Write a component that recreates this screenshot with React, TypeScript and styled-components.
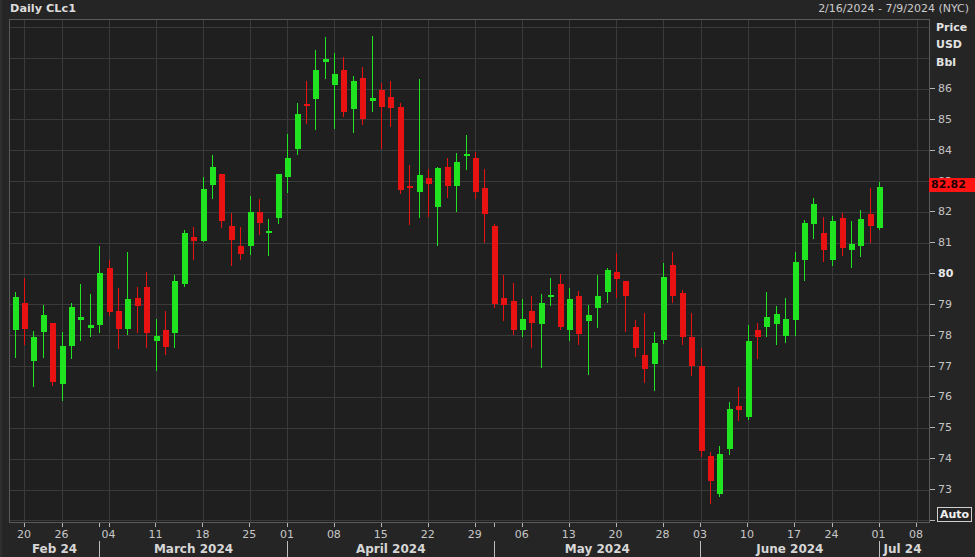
import React from "react";
import styled, { createGlobalStyle } from "styled-components";

type Bar = [open: number, high: number, low: number, close: number];

// CLc1 daily bars, 16 Feb 2024 -> 1 Jul 2024
const BARS: Bar[] = [
    [78.18, 79.39, 77.26, 79.24], [79.06, 79.85, 77.69, 78.20], [77.17, 78.15, 76.34, 77.96], [78.12, 78.98, 77.26, 78.67],
    [78.41, 78.41, 76.37, 76.50], [76.43, 78.10, 75.88, 77.66], [77.66, 79.06, 77.23, 78.93], [78.50, 79.66, 77.82, 78.59],
    [78.24, 79.34, 77.96, 78.33], [78.32, 80.90, 78.09, 80.03], [80.19, 80.45, 78.61, 78.77], [78.79, 79.53, 77.56, 78.20],
    [78.20, 80.71, 78.01, 79.19], [79.20, 79.58, 78.07, 78.96], [79.58, 80.05, 77.58, 78.07], [77.82, 78.52, 76.83, 77.98],
    [78.16, 78.79, 77.35, 77.62], [78.09, 79.96, 77.60, 79.77], [79.67, 81.42, 79.58, 81.31], [81.20, 81.52, 80.45, 81.07],
    [81.06, 83.12, 81.04, 82.75], [82.88, 83.84, 82.42, 83.47], [83.23, 83.23, 81.49, 81.71], [81.55, 81.97, 80.24, 81.09],
    [80.90, 81.52, 80.45, 80.64], [80.88, 82.53, 80.61, 82.00], [82.00, 82.42, 81.24, 81.64], [81.32, 81.77, 80.58, 81.38],
    [81.80, 83.22, 81.61, 83.22], [83.14, 84.53, 82.61, 83.74], [84.04, 85.54, 83.85, 85.18], [85.50, 86.24, 84.85, 85.44],
    [85.66, 87.25, 84.66, 86.60], [86.87, 87.66, 86.31, 86.95], [86.11, 87.14, 84.69, 86.46], [86.60, 87.03, 85.07, 85.25],
    [85.33, 86.41, 84.57, 86.24], [86.35, 86.71, 84.82, 85.01], [85.60, 87.70, 85.25, 85.70], [85.95, 86.17, 84.03, 85.39],
    [85.73, 86.24, 84.74, 85.38], [85.41, 85.54, 82.57, 82.71], [82.85, 83.52, 81.58, 82.77], [82.66, 86.30, 81.81, 83.18],
    [83.11, 83.38, 81.84, 82.89], [82.15, 83.47, 80.90, 83.41], [83.44, 83.76, 82.44, 82.85], [82.85, 83.90, 82.01, 83.62],
    [83.84, 84.50, 83.36, 83.89], [83.74, 83.95, 82.41, 82.66], [82.79, 83.38, 80.99, 81.93], [81.55, 81.60, 78.87, 79.03],
    [79.20, 79.96, 78.45, 78.99], [79.12, 79.71, 78.02, 78.16], [78.18, 79.17, 77.94, 78.52], [78.79, 79.26, 77.58, 78.41],
    [78.37, 79.33, 76.94, 79.06], [79.26, 79.85, 78.95, 79.32], [79.67, 79.99, 78.16, 78.28], [78.18, 79.53, 77.82, 79.17],
    [79.28, 79.42, 77.69, 78.05], [78.47, 78.99, 76.72, 78.66], [78.88, 79.94, 78.23, 79.28], [79.40, 80.19, 79.04, 80.12],
    [80.06, 80.66, 79.20, 79.82], [79.77, 79.77, 78.12, 79.29], [78.27, 78.50, 77.29, 77.58], [77.36, 78.72, 76.45, 76.91],
    [77.06, 78.11, 76.21, 77.76], [77.85, 80.33, 77.72, 79.88], [80.29, 80.70, 79.04, 79.26], [79.37, 79.48, 77.67, 77.93],
    [77.96, 78.72, 76.69, 77.00], [77.02, 77.58, 74.06, 74.26], [74.08, 74.22, 72.53, 73.28], [72.85, 74.41, 72.77, 74.14],
    [74.33, 75.85, 74.12, 75.61], [75.72, 76.34, 75.23, 75.58], [75.36, 78.34, 75.27, 77.80], [78.18, 78.41, 77.24, 77.93],
    [78.27, 79.39, 77.94, 78.58], [78.37, 78.94, 77.69, 78.69], [77.99, 79.20, 77.75, 78.52], [78.50, 80.71, 77.99, 80.38],
    [80.45, 81.74, 79.77, 81.63], [81.61, 82.44, 81.12, 82.25], [81.33, 81.85, 80.37, 80.76], [80.45, 81.87, 80.26, 81.71],
    [81.80, 81.96, 80.58, 80.84], [80.77, 81.71, 80.19, 80.95], [80.88, 82.06, 80.53, 81.77], [81.92, 82.77, 80.99, 81.55],
    [81.47, 82.98, 81.41, 82.82],
];

// first trading day of each week (slot index, day label)
const WEEKS: [number, string][] = [
    [1, "20"], [5, "26"], [10, "04"], [15, "11"], [20, "18"], [25, "25"], [29, "01"], [34, "08"], [39, "15"], [44, "22"],
    [49, "29"], [54, "06"], [59, "13"], [64, "20"], [69, "28"], [73, "03"], [78, "10"], [83, "17"], [87, "24"], [92, "01"], [96, "08"],
];
// first trading day of each month; the last edge closes "Jul 24"
const MONTH_STARTS = [9, 29, 51, 73, 92];
const MONTHS = ["Feb 24", "March 2024", "April 2024", "May 2024", "June 2024", "Jul 24"];
const AXIS_END_SLOT = 97;

const PLOT_W = 919;
const PLOT_H = 502;
const PLOT_LEFT = 10;
const SLOT = 9.397;
const FIRST_SLOT = 4.6;
const PX_PER_USD = 30.85;
const UP = "#1fe41f";
const DOWN = "#e81212";

const slotX = (i: number) => FIRST_SLOT + i * SLOT;
const priceY = (p: number) => 68.5 + (86 - p) * PX_PER_USD;

const LAST = BARS[BARS.length - 1][3];
const PRICE_LEVELS = [86, 85, 84, 83, 82, 81, 80, 79, 78, 77, 76, 75, 74, 73];
// axis box starts 1px above the plot's inner area (the border)
const AXIS_HEAD = priceY(PRICE_LEVELS[0]) + 1 - PX_PER_USD / 2;

// grid line n of the date axis sits on the centre of slot n - 2
const slotLine = (i: number) => i + 2;

const GlobalStyle = createGlobalStyle`
    html, body { margin: 0; padding: 0; background: #252525; }
    body { font-family: "DejaVu Sans", "Liberation Sans", sans-serif; }
`;

const Terminal = styled.div`
    width: 975px;
    height: 557px;
    overflow: hidden;
    background: #252525;
    box-shadow: inset 2px 0 0 #2f2f2f;
`;

const TitleBar = styled.header`
    height: 19px;
    display: flex;
    align-items: center;
    justify-content: space-between;
    padding: 0 6px 2px 10px;
    box-sizing: border-box;
`;

const Title = styled.span`
    font-size: 11.3px;
    font-weight: bold;
    color: #dcdcdc;
`;

const Range = styled.span`
    font-size: 11px;
    color: #cbcbcb;
`;

const ChartGrid = styled.div`
    display: grid;
    grid-template-columns: 9px 921px 45px;
    grid-template-rows: 504px 34px;
`;

const Plot = styled.div`
    grid-column: 2;
    grid-row: 1;
    border: 1px solid #5a5a5a;
    background: #1e1f1e;

    svg { display: block; }
`;

const GridLine = styled.line`
    stroke: #393a39;
    stroke-width: 1;
`;

const PriceAxis = styled.div`
    grid-column: 3;
    grid-row: 1;
    position: relative;
    display: grid;
    grid-template-rows: ${AXIS_HEAD}px repeat(${PRICE_LEVELS.length}, ${PX_PER_USD}px) 1fr;
`;

const Units = styled.div`
    padding-left: 6px;
    font-size: 11px;
    font-weight: bold;
    line-height: 17.3px;
    color: #e2e2e2;
`;

const Dash = styled.span`
    width: 5px;
    height: 1px;
    flex: none;
    background: #b4b4b4;
`;

const PriceLevel = styled.div<{ $major?: boolean }>`
    display: flex;
    align-items: center;
    gap: 3px;
    font-size: 11px;
    font-weight: ${p => p.$major ? "bold" : "normal"};
    color: ${p => p.$major ? "#e8e8e8" : "#c4c4c4"};
`;

const AxisFoot = styled.div`
    display: flex;
    align-items: flex-end;
    gap: 2px;

    ${Dash} { margin-bottom: 2px; }
`;

const AutoButton = styled.div`
    margin-bottom: 1px;
    padding: 0 2px;
    border: 1px solid #d0d0d0;
    font-size: 11px;
    font-weight: bold;
    line-height: 13px;
    color: #f2f2f2;
`;

const LastPrice = styled.div`
    position: absolute;
    left: -1px;
    right: 0;
    height: 14px;
    padding-left: 2px;
    background: #ff1414;
    color: #1a0000;
    font-size: 11px;
    font-weight: bold;
    line-height: 14px;
`;

const DateAxis = styled.div`
    grid-column: 1 / -1;
    grid-row: 2;
    display: grid;
    grid-template-columns: ${PLOT_LEFT + FIRST_SLOT}px repeat(${AXIS_END_SLOT + 1}, ${SLOT}px) 1fr;
    grid-template-rows: 5px 13px 16px;
`;

const DayTick = styled.div<{ $slot: number }>`
    grid-row: 1;
    grid-column: ${p => slotLine(p.$slot)};
    justify-self: start;
    width: 1px;
    height: 4px;
    background: #b4b4b4;
`;

const DayLabel = styled.span<{ $slot: number }>`
    grid-row: 2;
    grid-column: ${p => slotLine(p.$slot) - 1} / span 2;
    text-align: center;
    font-size: 11px;
    line-height: 14px;
    color: #c8c8c8;
`;

const MonthCell = styled.div<{ $from: number; $to: number; $first?: boolean }>`
    grid-row: 3;
    grid-column: ${p => p.$from} / ${p => p.$to};
    display: flex;
    align-items: center;
    justify-content: center;
    padding-left: ${p => p.$first ? "9px" : "0"};
    border-left: 1px solid ${p => p.$first ? "transparent" : "#bdbdbd"};
    font-size: 12px;
    font-weight: bold;
    color: #d6d6d6;
    white-space: nowrap;
`;

const Candle = ({ bar, index }: { bar: Bar; index: number }) => {
    const [open, high, low, close] = bar;
    const color = close >= open ? UP : DOWN;
    const x = Math.round(slotX(index));
    const top = priceY(Math.max(open, close));
    const height = Math.max(2, Math.abs(priceY(open) - priceY(close)));
    return (
        <g>
            <line x1={x + 0.5} x2={x + 0.5} y1={priceY(high)} y2={priceY(low)} stroke={color} strokeWidth={1} />
            <rect x={x - 2} y={top} width={6} height={height} fill={color} />
        </g>
    );
};

export default function App() {
    const monthEdges = [1, ...MONTH_STARTS.map(slotLine), slotLine(AXIS_END_SLOT)];

    return (
        <Terminal>
            <GlobalStyle />
            <TitleBar>
                <Title>Daily CLc1</Title>
                <Range>2/16/2024 - 7/9/2024 (NYC)</Range>
            </TitleBar>
            <ChartGrid>
                <Plot>
                    <svg width={PLOT_W} height={PLOT_H} shapeRendering="crispEdges">
                        {[88, 87, ...PRICE_LEVELS, 72].map(p => {
                            const y = Math.round(priceY(p)) + 0.5;
                            return <GridLine key={p} x1={0} x2={PLOT_W} y1={y} y2={y} />;
                        })}
                        {WEEKS.map(([i]) => {
                            const x = Math.round(slotX(i)) + 0.5;
                            return <GridLine key={i} x1={x} x2={x} y1={0} y2={PLOT_H} />;
                        })}
                        {BARS.map((bar, i) => <Candle key={i} bar={bar} index={i} />)}
                    </svg>
                </Plot>
                <PriceAxis>
                    <Units>Price<br />USD<br />Bbl</Units>
                    {PRICE_LEVELS.map(p => (
                        <PriceLevel key={p} $major={p === 80}><Dash />{p}</PriceLevel>
                    ))}
                    <AxisFoot>
                        <Dash />
                        <AutoButton>Auto</AutoButton>
                    </AxisFoot>
                    <LastPrice style={{ top: priceY(LAST) - 8 }}>{LAST.toFixed(2)}</LastPrice>
                </PriceAxis>
                <DateAxis>
                    {WEEKS.map(([i, label]) => (
                        <React.Fragment key={i}>
                            <DayTick $slot={i} />
                            <DayLabel $slot={i}>{label}</DayLabel>
                        </React.Fragment>
                    ))}
                    {MONTH_STARTS.filter(i => !WEEKS.some(([w]) => w === i)).map(i => <DayTick key={i} $slot={i} />)}
                    {MONTHS.map((label, m) => (
                        <MonthCell key={label} $first={m === 0} $from={monthEdges[m]} $to={monthEdges[m + 1]}>
                            {label}
                        </MonthCell>
                    ))}
                </DateAxis>
            </ChartGrid>
        </Terminal>
    );
}
